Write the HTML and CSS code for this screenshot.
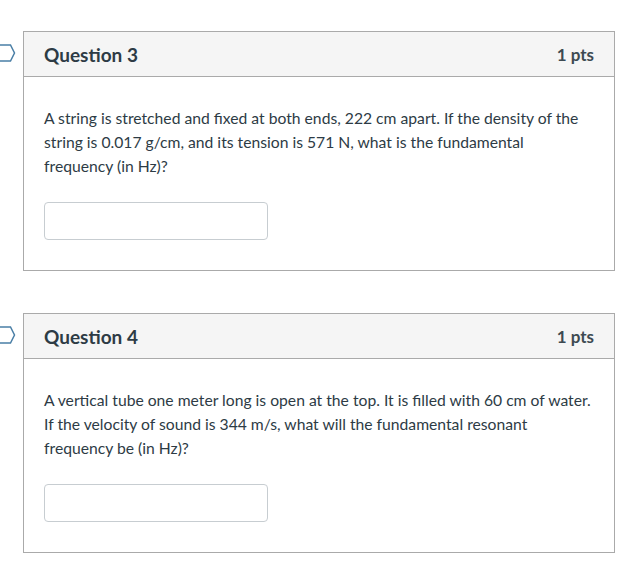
FILE: index.html
```html
<!DOCTYPE html>
<html>
<head>
<meta charset="utf-8">
<link rel="stylesheet" href="styles.css">
</head>
<body>
<div class="quiz">
  <div class="question">
    <svg class="flag" width="16" height="18" viewBox="0 0 16 18"><polyline points="-2,1 10.5,1 14.5,9 10.5,17 -2,17" fill="none" stroke="#4a7fa6" stroke-width="1.5"/></svg>
    <div class="card">
      <div class="card-header">
        <span class="q-title">Question 3</span>
        <span class="q-pts">1 pts</span>
      </div>
      <div class="card-body">
        <p class="q-text">A string is stretched and fixed at both ends, 222 cm apart. If the density of the string is 0.017 g/cm, and its tension is 571 N, what is the fundamental frequency (in Hz)?</p>
        <input class="answer" type="text">
      </div>
    </div>
  </div>
  <div class="question">
    <svg class="flag" width="16" height="18" viewBox="0 0 16 18"><polyline points="-2,1 10.5,1 14.5,9 10.5,17 -2,17" fill="none" stroke="#4a7fa6" stroke-width="1.5"/></svg>
    <div class="card">
      <div class="card-header">
        <span class="q-title">Question 4</span>
        <span class="q-pts">1 pts</span>
      </div>
      <div class="card-body">
        <p class="q-text">A vertical tube one meter long is open at the top. It is filled with 60 cm of water. If the velocity of sound is 344 m/s, what will the fundamental resonant frequency be (in Hz)?</p>
        <input class="answer" type="text">
      </div>
    </div>
  </div>
</div>
</body>
</html>
```
FILE: styles.css
```css
html, body {
  margin: 0;
  padding: 0;
  background: #ffffff;
}
body {
  font-family: Lato, "Open Sans", sans-serif;
  color: #2d3b45;
}
.quiz {
  display: flex;
  flex-direction: column;
  gap: 42px;
  padding: 31px 19px 0 23px;
}
.question {
  position: relative;
}
.flag {
  position: absolute;
  left: -23px;
  top: 13px;
}
.card {
  border: 1px solid #aaaaaa;
  background: #fff;
}
.card-header {
  display: flex;
  justify-content: space-between;
  align-items: center;
  height: 44px;
  padding: 0 20px;
  background: #f5f5f5;
  border-bottom: 1px solid #aaaaaa;
}
.q-title {
  font-weight: 700;
  font-size: 19px;
}
.q-pts {
  font-weight: 700;
  font-size: 17px;
  color: #3d4a52;
}
.card-body {
  padding: 29px 20px 30px 20px;
}
.q-text {
  margin: 0 0 24px 0;
  font-size: 15.7px;
  line-height: 24px;
}
.answer {
  display: block;
  box-sizing: border-box;
  width: 224px;
  height: 38px;
  margin: 0;
  border: 1px solid #c7cdd1;
  border-radius: 4px;
  background: #fff;
}
```
